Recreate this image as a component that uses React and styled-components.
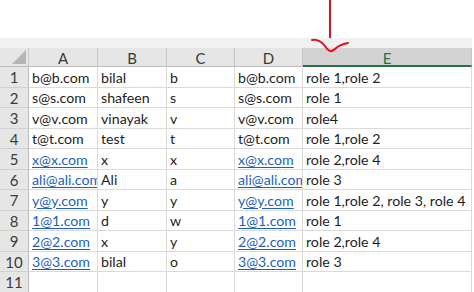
import React from "react";
import styled, { createGlobalStyle } from "styled-components";

const Global = createGlobalStyle`
  html, body { margin: 0; padding: 0; background: #ffffff; }
  body { font-family: Lato, "Liberation Sans", sans-serif; }
`;

const Page = styled.div`
  position: relative;
  width: 474px;
  height: 292px;
  overflow: hidden;
  background: #ffffff;
`;

const TopSpace = styled.div`
  height: 38px;
`;

const Strip = styled.div`
  width: 472px;
  height: 10px;
  background: #f1f1f1;
`;

const Sheet = styled.div`
  display: grid;
  width: 472px;
  grid-template-columns: 29px 69px 69px 68px 68px 169px;
  grid-template-rows: 19px repeat(11, 20.5px);
  font-size: 14.2px;
  color: #1e1e1e;
`;

const Corner = styled.div`
  position: relative;
  background: #e6e6e6;
  border-right: 1px solid #c9c9c9;
  border-bottom: 1px solid #bdbdbd;
  box-sizing: border-box;
  &::after {
    content: "";
    position: absolute;
    right: 2px;
    bottom: 2px;
    width: 0;
    height: 0;
    border-left: 14px solid transparent;
    border-bottom: 14px solid #b5b5b5;
  }
`;

const ColHeader = styled.div`
  box-sizing: border-box;
  display: flex;
  align-items: center;
  justify-content: center;
  background: ${(p) => (p.$selected ? "#d3d3d3" : "#e6e6e6")};
  color: ${(p) => (p.$selected ? "#217346" : "#3a3a3a")};
  border-right: 1px solid #c6c6c6;
  border-bottom: ${(p) => (p.$selected ? "2px solid #217346" : "1px solid #bdbdbd")};
  padding-top: 2px;
  font-size: 15px;
`;

const RowHeader = styled.div`
  box-sizing: border-box;
  display: flex;
  align-items: center;
  justify-content: center;
  background: #e6e6e6;
  color: #3a3a3a;
  border-right: 1px solid #bdbdbd;
  border-bottom: 1px solid #d0d0d0;
  padding-top: 1px;
  font-size: 15px;
`;

const Cell = styled.div`
  box-sizing: border-box;
  display: flex;
  align-items: center;
  padding-left: 3px;
  padding-top: 1px;
  white-space: nowrap;
  overflow: hidden;
  border-right: 1px solid #dadada;
  border-bottom: 1px solid #dadada;
  color: ${(p) => (p.$link ? "#1d5fbf" : "#1e1e1e")};
  text-decoration: ${(p) => (p.$link ? "underline" : "none")};
  text-underline-offset: 2px;
`;

const Annotation = styled.svg`
  position: absolute;
  left: 0;
  top: 0;
  pointer-events: none;
`;

const cols = ["A", "B", "C", "D", "E"];

const rows = [
  ["b@b.com", "bilal", "b", "b@b.com", "role 1,role 2", false],
  ["s@s.com", "shafeen", "s", "s@s.com", "role 1", false],
  ["v@v.com", "vinayak", "v", "v@v.com", "role4", false],
  ["t@t.com", "test", "t", "t@t.com", "role 1,role 2", false],
  ["x@x.com", "x", "x", "x@x.com", "role 2,role 4", true],
  ["ali@ali.com", "Ali", "a", "ali@ali.com", "role 3", true],
  ["y@y.com", "y", "y", "y@y.com", "role 1,role 2, role 3, role 4", true],
  ["1@1.com", "d", "w", "1@1.com", "role 1", true],
  ["2@2.com", "x", "y", "2@2.com", "role 2,role 4", true],
  ["3@3.com", "bilal", "o", "3@3.com", "role 3", true],
  ["", "", "", "", "", false],
];

export default function App() {
  return (
    <Page>
      <Global />
      <TopSpace />
      <Strip />
      <Sheet>
        <Corner />
        {cols.map((c) => (
          <ColHeader key={c} $selected={c === "E"}>
            {c}
          </ColHeader>
        ))}
        {rows.map((r, i) => (
          <React.Fragment key={i}>
            <RowHeader>{i + 1}</RowHeader>
            <Cell $link={r[5]}>{r[0]}</Cell>
            <Cell>{r[1]}</Cell>
            <Cell>{r[2]}</Cell>
            <Cell $link={r[5]}>{r[3]}</Cell>
            <Cell>{r[4]}</Cell>
          </React.Fragment>
        ))}
      </Sheet>
      <Annotation width="474" height="60" viewBox="0 0 474 60">
        <path d="M330 0 L330 38" stroke="#e2101c" strokeWidth="2" fill="none" />
        <path
          d="M312 40 C317 39 321 41 325 46 C328 51 331 53 335 49 C339 45 343 44 348 43"
          stroke="#e2101c"
          strokeWidth="2"
          fill="none"
          strokeLinecap="round"
        />
      </Annotation>
    </Page>
  );
}
